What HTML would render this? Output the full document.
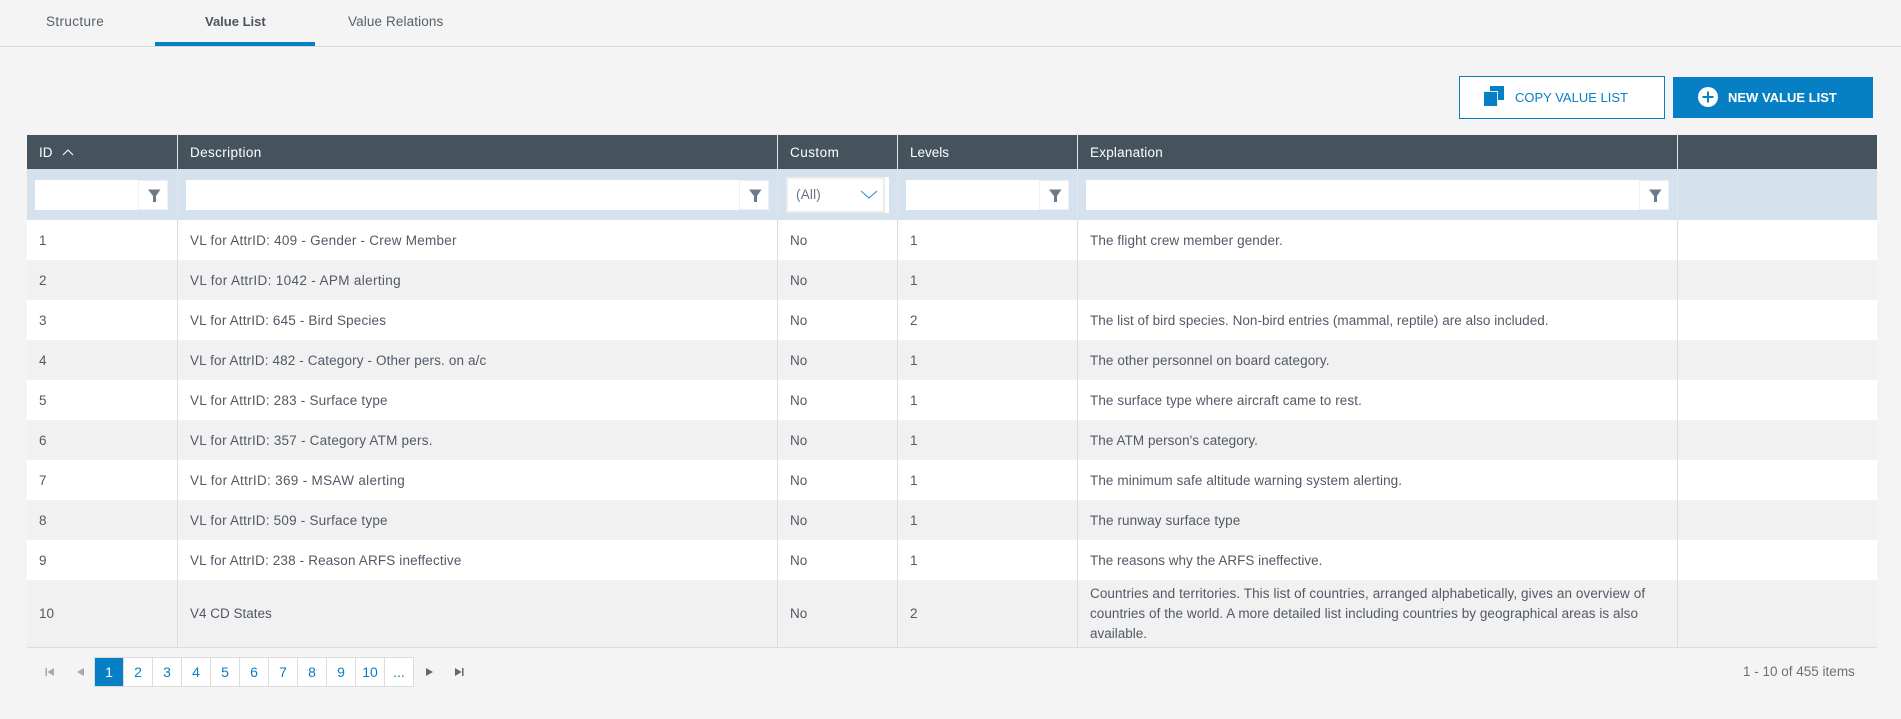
<!DOCTYPE html>
<html lang="en"><head><meta charset="utf-8"><title>Value List</title>
<style>
*{box-sizing:border-box}
html,body{margin:0;padding:0;width:1901px;height:719px;overflow:hidden;background:#f4f4f4;font-family:"Liberation Sans",sans-serif;font-size:13.5px;color:#515967}
.a{position:absolute}
.tab{position:absolute;top:14px;line-height:16px;font-size:13.5px;color:#555f68;white-space:nowrap}
table{position:absolute;left:27px;top:135px;width:1850px;table-layout:fixed;border-collapse:separate;border-spacing:0}
th,td{padding:0 0 0 12px;text-align:left;font-weight:normal;border-left:1px solid #dcdcdc;vertical-align:middle;overflow:hidden;white-space:nowrap}
th:first-child,td:first-child{border-left:0}
th{height:34px;background:#45535c;color:#fff;border-left-color:#e3e6e8}
.f td{height:51px;background:#d5e1ec;border-left-color:#dfe6ee}
tbody td{height:40px;background:#fff}
tbody tr:nth-child(even) td{background:#f1f1f1}
tbody tr.t td{height:68px;border-bottom:1px solid #dcdcdc;line-height:20px;padding-top:1px}
.in{position:absolute;top:180px;height:30px;background:#fff}
.fb{position:absolute;right:0;top:0;width:30px;height:30px;border:1px solid #eef0f3;background:#fff}
.fb svg{position:absolute;left:9px;top:7px}
.btn{position:absolute;display:flex;align-items:center;font-size:13px;white-space:nowrap}
.pg{position:absolute;top:657px;width:30px;height:30px;border:1px solid #dcdcdc;background:#fff;color:#067fc4;text-align:center;line-height:28px;font-size:14px}
.pg.on{background:#067fc4;color:#fff}
</style></head><body>

<div class="tab" style="left:46px;letter-spacing:.37px">Structure</div>
<div class="tab" style="left:205px;font-size:13px;font-weight:bold;color:#4b5560">Value List</div>
<div class="tab" style="left:348px;letter-spacing:.12px">Value Relations</div>
<div class="a" style="left:0;top:46px;width:1901px;height:1px;background:#dcdcdc"></div>
<div class="a" style="left:155px;top:42px;width:160px;height:4px;background:#067fc4"></div>

<div class="btn" style="left:1459px;top:76px;width:206px;height:43px;background:#fff;border:1px solid #067fc4;color:#067fc4">
  <svg class="a" style="left:24px;top:9px" width="20" height="20" viewBox="0 0 20 20"><rect x="6" y="0" width="14" height="14" fill="#067fc4"/><rect x="0" y="5" width="14" height="15" fill="#dcedf8"/><rect x="0" y="6" width="13" height="14" fill="#067fc4"/></svg>
  <span class="a" style="left:55px;top:13px;line-height:16px">COPY VALUE LIST</span>
</div>
<div class="btn" style="left:1673px;top:77px;width:200px;height:41px;background:#067fc4;color:#fff;font-weight:bold">
  <svg class="a" style="left:25px;top:10px" width="20" height="20" viewBox="0 0 20 20"><circle cx="10" cy="10" r="10" fill="#fff"/><path d="M10 4.5v11M4.5 10h11" stroke="#067fc4" stroke-width="2"/></svg>
  <span class="a" style="left:55px;top:13px;line-height:16px">NEW VALUE LIST</span>
</div>

<table>
<colgroup><col style="width:150px"><col style="width:600px"><col style="width:120px"><col style="width:180px"><col style="width:600px"><col style="width:200px"></colgroup>
<thead>
<tr><th>ID</th><th style="letter-spacing:.37px">Description</th><th style="letter-spacing:.47px">Custom</th><th>Levels</th><th style="letter-spacing:.22px">Explanation</th><th></th></tr>
<tr class="f"><td></td><td></td><td></td><td></td><td></td><td></td></tr>
</thead>
<tbody>
<tr><td>1</td><td style="letter-spacing:.24px">VL for AttrID: 409 - Gender - Crew Member</td><td>No</td><td>1</td><td style="letter-spacing:.1px">The flight crew member gender.</td><td></td></tr>
<tr><td>2</td><td style="letter-spacing:.35px">VL for AttrID: 1042 - APM alerting</td><td>No</td><td>1</td><td></td><td></td></tr>
<tr><td>3</td><td style="letter-spacing:.16px">VL for AttrID: 645 - Bird Species</td><td>No</td><td>2</td><td style="letter-spacing:.03px">The list of bird species. Non-bird entries (mammal, reptile) are also included.</td><td></td></tr>
<tr><td>4</td><td style="letter-spacing:.13px">VL for AttrID: 482 - Category - Other pers. on a/c</td><td>No</td><td>1</td><td style="letter-spacing:.09px">The other personnel on board category.</td><td></td></tr>
<tr><td>5</td><td style="letter-spacing:.21px">VL for AttrID: 283 - Surface type</td><td>No</td><td>1</td><td style="letter-spacing:.09px">The surface type where aircraft came to rest.</td><td></td></tr>
<tr><td>6</td><td style="letter-spacing:.22px">VL for AttrID: 357 - Category ATM pers.</td><td>No</td><td>1</td><td style="letter-spacing:.06px">The ATM person's category.</td><td></td></tr>
<tr><td>7</td><td style="letter-spacing:.31px">VL for AttrID: 369 - MSAW alerting</td><td>No</td><td>1</td><td style="letter-spacing:.09px">The minimum safe altitude warning system alerting.</td><td></td></tr>
<tr><td>8</td><td style="letter-spacing:.21px">VL for AttrID: 509 - Surface type</td><td>No</td><td>1</td><td style="letter-spacing:.11px">The runway surface type</td><td></td></tr>
<tr><td>9</td><td style="letter-spacing:.15px">VL for AttrID: 238 - Reason ARFS ineffective</td><td>No</td><td>1</td><td>The reasons why the ARFS ineffective.</td><td></td></tr>
<tr class="t"><td>10</td><td>V4 CD States</td><td>No</td><td>2</td><td><span style="letter-spacing:.09px">Countries and territories. This list of countries, arranged alphabetically, gives an overview of</span><br><span style="letter-spacing:.05px">countries of the world. A more detailed list including countries by geographical areas is also</span><br><span>available.</span></td><td></td></tr>
</tbody>
</table>

<svg class="a" style="left:62px;top:148px" width="12" height="8" viewBox="0 0 12 8"><path d="M1 7l5-5 5 5" fill="none" stroke="#fff" stroke-width="1.1"/></svg>

<div class="in" style="left:35px;width:133px"><div class="fb"><svg width="13" height="15" viewBox="0 0 13 15"><path d="M0 1.5h12.5L8 8v6H5V8z" fill="#6c7a8a"/></svg></div></div>
<div class="in" style="left:186px;width:583px"><div class="fb"><svg width="13" height="15" viewBox="0 0 13 15"><path d="M0 1.5h12.5L8 8v6H5V8z" fill="#6c7a8a"/></svg></div></div>
<div class="in" style="left:906px;width:163px"><div class="fb"><svg width="13" height="15" viewBox="0 0 13 15"><path d="M0 1.5h12.5L8 8v6H5V8z" fill="#6c7a8a"/></svg></div></div>
<div class="in" style="left:1086px;width:583px"><div class="fb"><svg width="13" height="15" viewBox="0 0 13 15"><path d="M0 1.5h12.5L8 8v6H5V8z" fill="#6c7a8a"/></svg></div></div>

<div class="a" style="left:786px;top:177px;width:103px;height:36px;background:#fff"></div>
<div class="a" style="left:786px;top:177px;width:99px;height:36px;background:#fff;border:2px solid #ececec;line-height:32px;padding-left:8px;color:#6b7480;letter-spacing:.2px">(All)</div>
<svg class="a" style="left:860px;top:190px" width="18" height="10" viewBox="0 0 18 10"><path d="M1 1l8 7 8-7" fill="none" stroke="#2b96d6" stroke-width="1.1"/></svg>

<svg class="a" style="left:44px;top:666px" width="12" height="12" viewBox="0 0 12 12"><path d="M1.5 2v8H3V2zM10 2v8L3.5 6z" fill="#a9a9a9"/></svg>
<svg class="a" style="left:76px;top:666px" width="10" height="12" viewBox="0 0 10 12"><path d="M8 2v8L1 6z" fill="#a9a9a9"/></svg>

<div class="pg on" style="left:94px">1</div>
<div class="pg" style="left:123px">2</div>
<div class="pg" style="left:152px">3</div>
<div class="pg" style="left:181px">4</div>
<div class="pg" style="left:210px">5</div>
<div class="pg" style="left:239px">6</div>
<div class="pg" style="left:268px">7</div>
<div class="pg" style="left:297px">8</div>
<div class="pg" style="left:326px">9</div>
<div class="pg" style="left:355px">10</div>
<div class="pg" style="left:384px;width:30px">...</div>

<svg class="a" style="left:424px;top:666px" width="10" height="12" viewBox="0 0 10 12"><path d="M2 2v8l7-4z" fill="#666"/></svg>
<svg class="a" style="left:453px;top:666px" width="12" height="12" viewBox="0 0 12 12"><path d="M2 2v8l6.5-4zM9 2v8h1.5V2z" fill="#666"/></svg>

<div class="a" style="left:1743px;top:664px;line-height:16px;color:#6b6f75;white-space:nowrap">1 - 10 of 455 items</div>
</body></html>
